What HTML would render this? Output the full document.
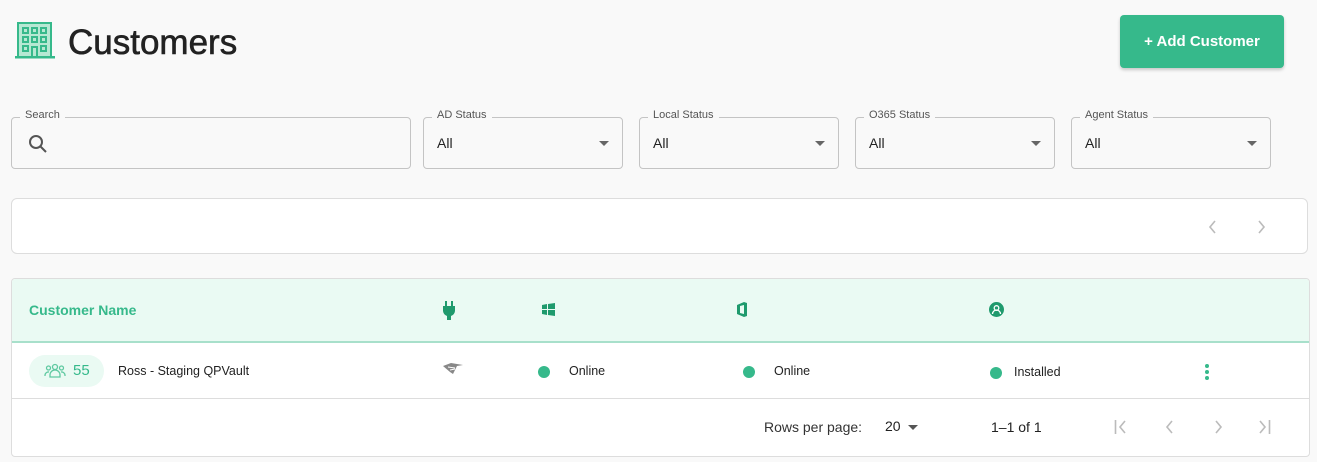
<!DOCTYPE html>
<html><head><style>
*{box-sizing:border-box;margin:0;padding:0}
body{width:1317px;height:462px;background:#f9f9f9;font-family:"Liberation Sans","DejaVu Sans",sans-serif;position:relative;overflow:hidden;color:#222}
.abs{position:absolute}
.field{position:absolute;top:117px;height:52px;border:1px solid #c4c4c4;border-radius:4px}
.field .lbl{position:absolute;top:-9px;left:8px;background:#f9f9f9;padding:0 5px;font-size:11px;color:#555}
.field .val{position:absolute;left:13px;top:17px;font-size:14px;color:#222}
.field .arr{position:absolute;right:13px;top:23px;width:0;height:0;border-left:5px solid transparent;border-right:5px solid transparent;border-top:5px solid #666}
.dot{position:absolute;width:12px;height:12px;border-radius:50%;background:#36b98b}
.t13{position:absolute;font-size:12.5px;color:#222}
</style></head><body>
<svg class="abs" style="left:15px;top:21px" width="40" height="38" viewBox="0 0 40 38">
<rect x="3" y="2" width="33" height="34" fill="#b6e8d3" stroke="#36b98b" stroke-width="2"/>
<rect x="0" y="35" width="40" height="2.5" fill="#36b98b"/>
<g fill="none" stroke="#36b98b" stroke-width="2">
<rect x="8" y="7" width="5" height="5"/><rect x="17" y="7" width="5" height="5"/><rect x="26" y="7" width="5" height="5"/>
<rect x="8" y="16" width="5" height="5"/><rect x="17" y="16" width="5" height="5"/><rect x="26" y="16" width="5" height="5"/>
<rect x="8" y="25" width="5" height="5"/><rect x="26" y="25" width="5" height="5"/><rect x="17" y="26" width="5" height="10"/>
</g></svg>
<div class="abs" style="left:68px;top:23px;font-size:35px;color:#222;-webkit-text-stroke:0.6px #222">Customers</div>
<div class="abs" style="left:1120px;top:15px;width:164px;height:53px;background:#36b98b;border-radius:4px;box-shadow:0 2px 3px rgba(0,0,0,.2);color:#fff;font-weight:bold;font-size:15px;text-align:center;line-height:53px">+ Add Customer</div>

<div class="field" style="left:11px;width:400px"><span class="lbl">Search</span>
<svg class="abs" style="left:16px;top:16px" width="20" height="20" viewBox="0 0 20 20"><circle cx="8" cy="8" r="6" fill="none" stroke="#555" stroke-width="2"/><line x1="12.5" y1="12.5" x2="18" y2="18" stroke="#555" stroke-width="2"/></svg></div>
<div class="field" style="left:423px;width:200px"><span class="lbl">AD Status</span><span class="val">All</span><span class="arr"></span></div>
<div class="field" style="left:639px;width:200px"><span class="lbl">Local Status</span><span class="val">All</span><span class="arr"></span></div>
<div class="field" style="left:855px;width:200px"><span class="lbl">O365 Status</span><span class="val">All</span><span class="arr"></span></div>
<div class="field" style="left:1071px;width:200px"><span class="lbl">Agent Status</span><span class="val">All</span><span class="arr"></span></div>

<div class="abs" style="left:11px;top:198px;width:1297px;height:56px;background:#fff;border:1px solid #ddd;border-radius:6px">
<svg class="abs" style="left:1196px;top:21px" width="10" height="14" viewBox="0 0 10 14"><path d="M7 1L2 7l5 6" fill="none" stroke="#bbb" stroke-width="1.6"/></svg>
<svg class="abs" style="left:1244px;top:21px" width="10" height="14" viewBox="0 0 10 14"><path d="M3 1l5 6-5 6" fill="none" stroke="#bbb" stroke-width="1.6"/></svg>
</div>

<div class="abs" style="left:11px;top:278px;width:1299px;height:179px;background:#fff;border:1px solid #ddd;border-radius:4px;overflow:hidden">
<div class="abs" style="left:0;top:0;width:100%;height:64px;background:#eafaf3;border-bottom:2px solid #a8e0cb"></div>
<div class="abs" style="left:17px;top:23px;font-size:14px;color:#36b98b;font-weight:bold">Customer Name</div>
<svg class="abs" style="left:430px;top:22px" width="14" height="20" viewBox="0 0 14 20"><rect x="3" y="0" width="2" height="5" fill="#1f9a6d"/><rect x="9" y="0" width="2" height="5" fill="#1f9a6d"/><path d="M1 5h12v5a6 6 0 0 1-4 5v4h-4v-4a6 6 0 0 1-4-5z" fill="#1f9a6d"/></svg>
<svg class="abs" style="left:530px;top:24px" width="13" height="13" viewBox="0 0 13 13"><path d="M0 2l5-1v5H0zM6 1l7-1v6H6zM0 7h5v5l-5-1zM6 7h7v6l-7-1z" fill="#1f9a6d"/></svg>
<svg class="abs" style="left:724px;top:23px" width="12" height="15" viewBox="0 0 12 15"><path d="M1 3l7-3 3 1v13l-3 1-7-3zM4 4v7l4 1V3z" fill="#1f9a6d" fill-rule="evenodd"/></svg>
<svg class="abs" style="left:977px;top:23px" width="15" height="15" viewBox="0 0 15 15"><circle cx="7.5" cy="7.5" r="7.5" fill="#1f9a6d"/><circle cx="7.5" cy="6" r="2.3" fill="none" stroke="#fff" stroke-width="1.3"/><path d="M3.5 12a4 4 0 0 1 8 0" fill="none" stroke="#fff" stroke-width="1.3"/></svg>

<div class="abs" style="left:17px;top:76px;width:75px;height:32px;border-radius:16px;background:#eafaf3"></div>
<svg class="abs" style="left:32px;top:84px" width="22" height="15" viewBox="0 0 22 15"><g fill="none" stroke="#5fc9a1" stroke-width="1.3"><circle cx="11" cy="4" r="2.5"/><circle cx="4.5" cy="5" r="2"/><circle cx="17.5" cy="5" r="2"/><path d="M6 14v-2a5 5 0 0 1 10 0v2zM1 13v-1a3.5 3.5 0 0 1 4-3M21 13v-1a3.5 3.5 0 0 0-4-3"/></g></svg>
<div class="abs" style="left:61px;top:83px;font-size:15px;color:#36b98b">55</div>
<div class="t13" style="left:106px;top:85px">Ross - Staging QPVault</div>
<svg class="abs" style="left:431px;top:84px" width="20" height="12" viewBox="0 0 20 12"><path d="M0 3l8-3 12 2-6 1-4 8-3-2z" fill="#888"/><path d="M5 4l7 1M7 7l5-1" stroke="#fff" stroke-width="1"/></svg>
<div class="dot" style="left:526px;top:87px"></div><div class="t13" style="left:557px;top:85px">Online</div>
<div class="dot" style="left:731px;top:87px"></div><div class="t13" style="left:762px;top:85px">Online</div>
<div class="dot" style="left:978px;top:88px"></div><div class="t13" style="left:1002px;top:86px">Installed</div>
<div class="abs" style="left:1193px;top:85px;width:4px"><div style="width:4px;height:4px;border-radius:50%;background:#36b98b;margin-bottom:2px"></div><div style="width:4px;height:4px;border-radius:50%;background:#36b98b;margin-bottom:2px"></div><div style="width:4px;height:4px;border-radius:50%;background:#36b98b"></div></div>

<div class="abs" style="left:0;top:119px;width:100%;height:1px;background:#ddd"></div>
<div class="abs" style="left:752px;top:140px;font-size:14px;color:#333">Rows per page:</div>
<div class="abs" style="left:873px;top:139px;font-size:14px;color:#222">20</div>
<div class="abs" style="left:896px;top:146px;border-left:5px solid transparent;border-right:5px solid transparent;border-top:5px solid #555"></div>
<div class="abs" style="left:979px;top:140px;font-size:14px;color:#222">1–1 of 1</div>
<svg class="abs" style="left:1102px;top:140px" width="14" height="16" viewBox="0 0 14 16"><path d="M1.5 1v14M11 2L6 8l5 6" fill="none" stroke="#bbb" stroke-width="1.6"/></svg>
<svg class="abs" style="left:1153px;top:140px" width="10" height="16" viewBox="0 0 10 16"><path d="M7 2L2 8l5 6" fill="none" stroke="#bbb" stroke-width="1.6"/></svg>
<svg class="abs" style="left:1201px;top:140px" width="10" height="16" viewBox="0 0 10 16"><path d="M3 2l5 6-5 6" fill="none" stroke="#bbb" stroke-width="1.6"/></svg>
<svg class="abs" style="left:1245px;top:140px" width="14" height="16" viewBox="0 0 14 16"><path d="M3 2l5 6-5 6M12.5 1v14" fill="none" stroke="#bbb" stroke-width="1.6"/></svg>
</div>
</body></html>
